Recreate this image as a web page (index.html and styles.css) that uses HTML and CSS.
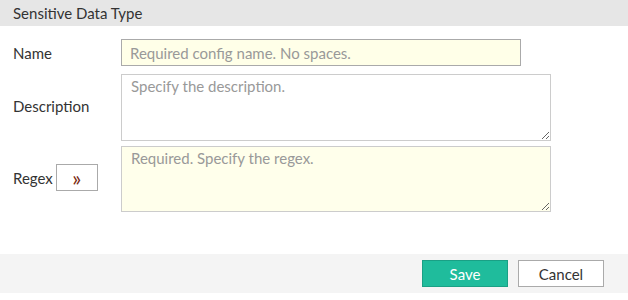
FILE: index.html
```html
<!DOCTYPE html>
<html lang="en">
<head>
  <meta charset="UTF-8" />
  <title>Sensitive Data Type</title>
  <link rel="stylesheet" href="styles.css">
</head>

<body>
  <div class="panel-head">Sensitive Data Type</div>

  <div class="form">
    <div class="row">
      <label class="lbl" for="name">Name</label>
      <input id="name" class="field name-field" type="text" placeholder="Required config name. No spaces." />
    </div>

    <div class="row">
      <label class="lbl" for="desc">Description</label>
      <textarea id="desc" class="field area" placeholder="Specify the description."></textarea>
    </div>

    <div class="row">
      <div class="lbl regex-lbl">
        <label for="regex">Regex</label>
        <button class="expand" type="button">&raquo;</button>
      </div>
      <textarea id="regex" class="field area req" placeholder="Required. Specify the regex."></textarea>
    </div>
  </div>

  <div class="footer">
    <button class="btn save" type="button">Save</button>
    <button class="btn cancel" type="button">Cancel</button>
  </div>
</body>
</html>
```

FILE: styles.css
```css
body {
  margin: 0;
  padding: 0;
  font-family: Lato, "Open Sans", sans-serif;
  font-size: 15px;
  color: #333;
  background: #fff;
}
.panel-head {
  height: 26px;
  line-height: 26px;
  padding-left: 13px;
  background: #e6e6e6;
  color: #333;
}
.form {
  padding: 13px 0 0 13px;
}
.row {
  display: grid;
  grid-template-columns: 108px auto;
  align-items: center;
  justify-content: start;
  margin-bottom: 5px;
}
.row:first-child {
  margin-bottom: 8px;
}
.lbl {
  color: #333;
  margin-bottom: 3px;
}
.row:first-child .lbl {
  margin-bottom: 0;
}
.regex-lbl {
  display: flex;
  align-items: center;
  gap: 3px;
}
.field {
  box-sizing: border-box;
  font-family: Lato, "Open Sans", sans-serif;
  font-size: 15px;
  color: #333;
  margin: 0;
  outline: none;
}
.field::placeholder {
  color: #999;
}
.name-field {
  width: 400px;
  height: 27px;
  padding: 0 8px;
  border: 1px solid #aaa;
  background: #ffffe8;
}
.area {
  display: block;
  width: 430px;
  height: 67px;
  padding: 2px 9px;
  border: 1px solid #ccc;
  background: #fff;
  resize: vertical;
}
.area.req {
  height: 66px;
  background: #ffffeb;
}
.expand {
  box-sizing: border-box;
  width: 42px;
  height: 27px;
  padding: 0;
  border: 1px solid #aaa;
  background: #fff;
  color: #7a2a10;
  font-family: Lato, sans-serif;
  font-size: 21px;
  line-height: 24px;
}
.footer {
  margin-top: 42px;
  height: 39px;
  background: #f4f4f4;
  display: flex;
  justify-content: flex-end;
  align-items: center;
  gap: 10px;
  padding-right: 24px;
}
.btn {
  box-sizing: border-box;
  height: 27px;
  font-family: Lato, sans-serif;
  font-size: 15px;
  padding: 0;
  cursor: pointer;
}
.save {
  width: 86px;
  background: #1fbc9c;
  border: 1px solid #1aa085;
  color: #fff;
}
.cancel {
  width: 86px;
  background: #fff;
  border: 1px solid #aaa;
  color: #333;
}
```
